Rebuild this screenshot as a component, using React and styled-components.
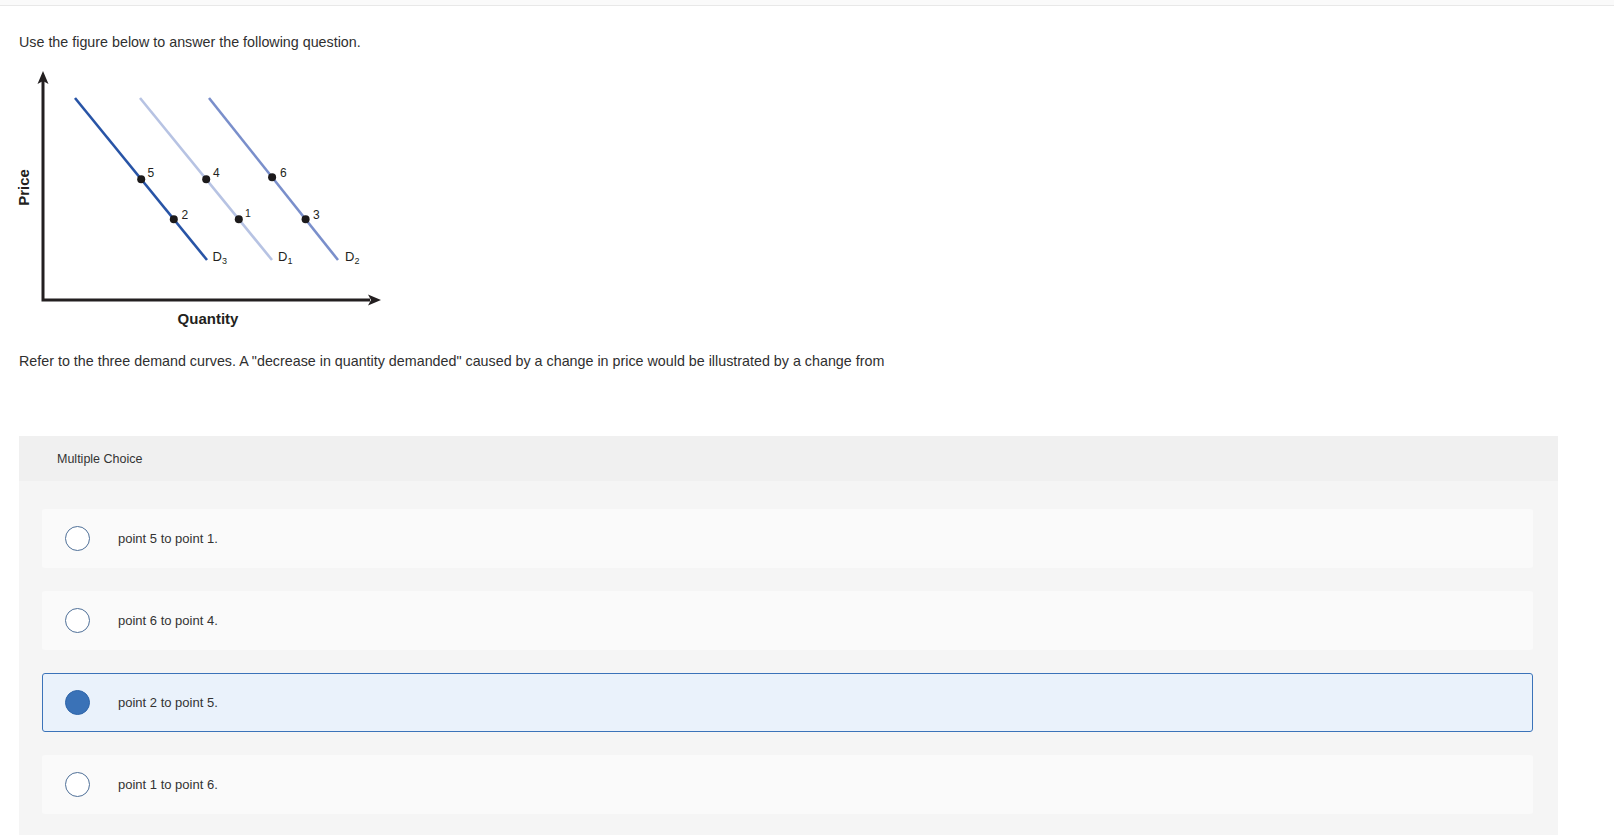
import React from "react";
import styled, { createGlobalStyle } from "styled-components";

const GlobalStyle = createGlobalStyle`
  body {
    margin: 0;
    background: #fff;
    font-family: "Liberation Sans", Arial, sans-serif;
    color: #333;
  }
`;

const TopBand = styled.div`
  height: 5px;
  background: #fafafa;
  border-bottom: 1px solid #e8e8e8;
`;

const Content = styled.main`
  padding: 0 56px 0 19px;
`;

const Prompt = styled.p`
  margin: ${(p) => p.$top}px 0 0;
  font-size: 14.3px;
  line-height: 20px;
  color: #2f2f2f;
`;

const Figure = styled.svg`
  display: block;
  margin: 14px 0 0 -5px;
  font-family: "Liberation Sans", Arial, sans-serif;
`;

const ChoiceBox = styled.section`
  margin-top: 65px;
  background: #f5f5f5;
  border-radius: 3px 3px 0 0;
`;

const ChoiceHeader = styled.header`
  height: 45px;
  display: flex;
  align-items: center;
  padding-left: 38px;
  background: #f0f0f0;
  font-size: 12.5px;
  color: #333;
`;

const OptionList = styled.div`
  display: flex;
  flex-direction: column;
  gap: 23px;
  padding: 28px 25px 28px 23px;
`;

const Option = styled.label`
  height: 59px;
  box-sizing: border-box;
  display: flex;
  align-items: center;
  gap: 28px;
  padding-left: 22px;
  border-radius: 3px;
  background: ${(p) => (p.$selected ? "#eaf2fb" : "#fafafa")};
  border: 1px solid ${(p) => (p.$selected ? "#3b73b9" : "transparent")};
  font-size: 13px;
  color: #333;
  cursor: pointer;
`;

const Radio = styled.span`
  width: 25px;
  height: 25px;
  box-sizing: border-box;
  border-radius: 50%;
  border: 1.5px solid ${(p) => (p.$selected ? "#2f65a8" : "#4f7098")};
  background: ${(p) => (p.$selected ? "#3a72b7" : "#fff")};
  flex-shrink: 0;
`;

const lines = [
  { from: [75, 98], to: [207, 260], color: "#2854a6" },
  { from: [140, 98], to: [272, 260], color: "#b7c3e3" },
  { from: [209, 98], to: [338, 260], color: "#7a8fcb" },
];

const points = [
  { x: 141.2, y: 179.3, label: "5", lx: 147.5, ly: 177.3 },
  { x: 173.8, y: 219.3, label: "2", lx: 181.5, ly: 218.7 },
  { x: 206.2, y: 179.3, label: "4", lx: 213, ly: 177.3 },
  { x: 238.8, y: 219.3, label: "1", lx: 245, ly: 216.5, small: true },
  { x: 272.1, y: 177.3, label: "6", lx: 280, ly: 176.5 },
  { x: 305.6, y: 219.3, label: "3", lx: 313, ly: 218.7 },
];

const curveLabels = [
  { x: 212.5, sub: "3" },
  { x: 278, sub: "1" },
  { x: 345, sub: "2" },
];

const options = [
  { text: "point 5 to point 1." },
  { text: "point 6 to point 4." },
  { text: "point 2 to point 5.", selected: true },
  { text: "point 1 to point 6." },
];

const DemandFigure = () => (
  <Figure width="376" height="268" viewBox="14 66 376 268">
    <g stroke="#231f20" strokeWidth="3" fill="none">
      <path d="M43 80 L43 300 L370 300" />
    </g>
    <path d="M43 71 L48.5 84 L43 81 L37.5 84 Z" fill="#231f20" />
    <path d="M381 300 L368 294.5 L371 300 L368 305.5 Z" fill="#231f20" />
    {lines.map((l, i) => (
      <line
        key={i}
        x1={l.from[0]}
        y1={l.from[1]}
        x2={l.to[0]}
        y2={l.to[1]}
        stroke={l.color}
        strokeWidth="2.6"
      />
    ))}
    {points.map((p) => (
      <g key={p.label}>
        <circle cx={p.x} cy={p.y} r="4" fill="#1c1a1b" />
        <text x={p.lx} y={p.ly} fontSize={p.small ? 10.5 : 12} fill="#231f20">
          {p.label}
        </text>
      </g>
    ))}
    {curveLabels.map((c) => (
      <text key={c.sub} x={c.x} y="260.5" fontSize="13" fill="#231f20">
        D
        <tspan dy="3" fontSize="9">
          {c.sub}
        </tspan>
      </text>
    ))}
    <text
      transform="translate(28.5 187.5) rotate(-90)"
      textAnchor="middle"
      fontSize="15"
      fontWeight="bold"
      fill="#231f20"
    >
      Price
    </text>
    <text x="208" y="324" textAnchor="middle" fontSize="15" fontWeight="bold" fill="#231f20">
      Quantity
    </text>
  </Figure>
);

const App = () => (
  <>
    <GlobalStyle />
    <TopBand />
    <Content>
      <Prompt $top={26}>Use the figure below to answer the following question.</Prompt>
      <DemandFigure />
      <Prompt $top={17}>
        Refer to the three demand curves. A "decrease in quantity demanded" caused by a change in
        price would be illustrated by a change from
      </Prompt>
      <ChoiceBox>
        <ChoiceHeader>Multiple Choice</ChoiceHeader>
        <OptionList>
          {options.map((o) => (
            <Option key={o.text} $selected={o.selected}>
              <Radio $selected={o.selected} />
              {o.text}
            </Option>
          ))}
        </OptionList>
      </ChoiceBox>
    </Content>
  </>
);

export default App;
